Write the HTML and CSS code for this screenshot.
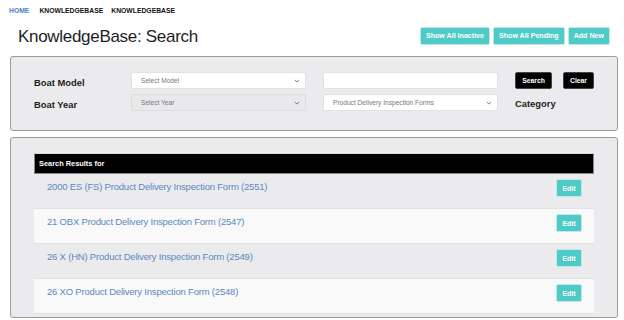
FILE: index.html
```html
<!DOCTYPE html>
<html>
<head>
<meta charset="utf-8">
<link rel="stylesheet" href="styles.css">
</head>
<body>
<nav class="crumbs">
  <a class="crumb home">HOME</a>
  <a class="crumb">KNOWLEDGEBASE</a>
  <a class="crumb">KNOWLEDGEBASE</a>
</nav>
<header class="head">
  <h1 class="title">KnowledgeBase: Search</h1>
  <div class="actions">
    <button class="tbtn">Show All Inactive</button>
    <button class="tbtn">Show All Pending</button>
    <button class="tbtn">Add New</button>
  </div>
</header>
<section class="panel search">
  <div class="grid">
    <label class="lbl">Boat Model</label>
    <div class="sel"><span>Select Model</span><svg class="chev" viewBox="0 0 8 5" width="6" height="4"><path d="M1 1l3 3 3-3" fill="none" stroke="#666" stroke-width="1.1"/></svg></div>
    <div class="inp"></div>
    <div class="btns"><button class="bbtn">Search</button><button class="bbtn">Clear</button></div>
    <label class="lbl">Boat Year</label>
    <div class="sel dis"><span>Select Year</span><svg class="chev" viewBox="0 0 8 5" width="6" height="4"><path d="M1 1l3 3 3-3" fill="none" stroke="#666" stroke-width="1.1"/></svg></div>
    <div class="sel"><span>Product Delivery Inspection Forms</span><svg class="chev" viewBox="0 0 8 5" width="6" height="4"><path d="M1 1l3 3 3-3" fill="none" stroke="#666" stroke-width="1.1"/></svg></div>
    <label class="lbl cat">Category</label>
  </div>
</section>
<section class="panel results">
  <div class="rhead">Search Results for</div>
  <div class="row"><a class="link">2000 ES (FS) Product Delivery Inspection Form (2551)</a><button class="edit">Edit</button></div>
  <div class="row alt"><a class="link">21 OBX Product Delivery Inspection Form (2547)</a><button class="edit">Edit</button></div>
  <div class="row"><a class="link">26 X (HN) Product Delivery Inspection Form (2549)</a><button class="edit">Edit</button></div>
  <div class="row alt"><a class="link">26 XO Product Delivery Inspection Form (2548)</a><button class="edit">Edit</button></div>
</section>
</body>
</html>
```
FILE: styles.css
```css
* { box-sizing: border-box; }
html, body { margin: 0; padding: 0; }
body {
  width: 624px;
  height: 320px;
  overflow: hidden;
  background: #fff;
  font-family: "Liberation Sans", Arial, sans-serif;
  color: #222;
}
.crumbs {
  display: flex;
  gap: 8px;
  padding: 6px 0 0 9px;
  height: 16px;
}
.crumb {
  font-size: 6.8px;
  font-weight: bold;
  color: #111;
  line-height: 9px;
}
.crumb.home { color: #4f7fc0; margin-right: 2px; }
.head {
  display: flex;
  align-items: center;
  justify-content: space-between;
  padding: 0 14px 0 18px;
  height: 20px;
  margin-top: 10px;
}
.title {
  margin: 0;
  font-size: 17px;
  line-height: 20px;
  font-weight: normal;
  color: #1e1e1e;
  letter-spacing: -0.3px;
  padding-top: 1px;
}
.actions { display: flex; gap: 3px; }
.tbtn {
  border: 1px solid #bfe9e6;
  background: #4ecbc6;
  color: #fff;
  font-family: inherit;
  font-weight: bold;
  font-size: 7.1px;
  height: 18px;
  padding: 0 5px;
  border-radius: 2px;
}
.panel {
  margin-left: 10px;
  width: 608px;
  background: #ebebed;
  border: 1px solid #9a9a9a;
  border-radius: 3px;
}
.search {
  margin-top: 10px;
  height: 75px;
  padding: 15px 0 0 23px;
}
.grid {
  display: grid;
  grid-template-columns: 80px 175px 175px auto;
  column-gap: 17px;
  row-gap: 5px;
  grid-template-rows: 17px 17px;
}
.lbl {
  font-size: 9.4px;
  font-weight: bold;
  color: #222;
  display: flex;
  align-items: center;
  padding-top: 3px;
}
.sel {
  background: #fff;
  border: 1px solid #e2e2e4;
  border-radius: 2px;
  display: flex;
  align-items: center;
  justify-content: space-between;
  padding: 0 5px 0 9px;
  font-size: 6.6px;
  color: #777;
}
.sel.dis { background: #e9e9eb; border-color: #dcdcde; }
.chev { flex: none; }
.inp {
  background: #fff;
  border: 1px solid #e2e2e4;
  border-radius: 2px;
}
.btns { display: flex; gap: 11px; }
.bbtn {
  background: #000;
  color: #fff;
  border: 1px solid #444;
  border-radius: 2px;
  font-family: inherit;
  font-weight: bold;
  font-size: 6.8px;
  height: 17px;
  padding: 0 6px;
}
.bbtn:first-child { width: 37px; }
.bbtn:last-child { width: 31px; }
.cat { padding-top: 2px; }
.results {
  margin-top: 6px;
  height: 181px;
  padding: 15px 23px 0 23px;
  overflow: hidden;
}
.rhead {
  background: #000;
  color: #fff;
  font-size: 7.4px;
  font-weight: bold;
  height: 21px;
  display: flex;
  align-items: center;
  padding-left: 4px;
  border: 1px solid #888;
  border-top-color: #ddd;
}
.row {
  height: 35px;
  display: flex;
  justify-content: space-between;
  align-items: flex-start;
  padding: 5px 12px 0 13px;
  border-bottom: 1px solid #e2e2e4;
}
.row.alt { background: #f9f9f9; }
.link {
  font-size: 9.5px;
  color: #5d87c2;
  letter-spacing: -0.2px;
  padding-top: 2px;
}
.edit {
  background: #4ecbc6;
  color: #fff;
  border: 1px solid #bfe9e6;
  border-radius: 2px;
  font-family: inherit;
  font-weight: bold;
  font-size: 7px;
  width: 26px;
  height: 18px;
  padding: 0;
}
```
